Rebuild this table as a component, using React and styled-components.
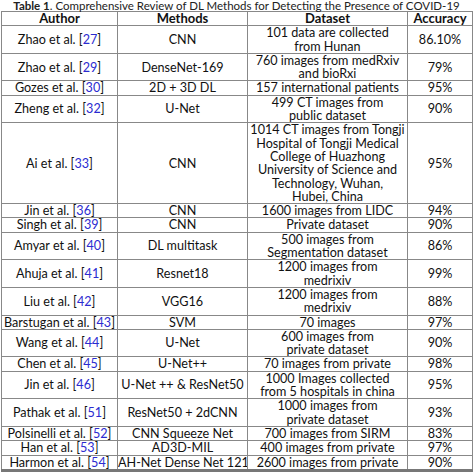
import React from "react";
import styled, { createGlobalStyle } from "styled-components";

const Global = createGlobalStyle`
  html, body { margin: 0; padding: 0; background: #fff; }
  body { font-family: Lato, "Open Sans", sans-serif; color: #111; }
`;

const Page = styled.div`
  width: 474px;
  height: 476px;
  overflow: hidden;
  padding: 0 2px 0 1px;
  box-sizing: border-box;
`;

const Caption = styled.div`
  font-size: 11.5px;
  line-height: 11px;
  height: 11px;
  text-align: center;
  white-space: nowrap;
  color: #222;
  b { font-weight: 700; }
`;

const Table = styled.table`
  width: 471px;
  border-collapse: collapse;
  table-layout: fixed;
  border-bottom: 3px solid #777;
`;

const Cell = styled.td`
  border: 1px solid #888;
  padding: 0;
  text-align: center;
  vertical-align: middle;
  font-size: 12.6px;
  line-height: 13.3px;
  white-space: nowrap;
  overflow: hidden;
`;

const Head = styled.th`
  border: 1px solid #888;
  padding: 0;
  font-size: 13px;
  line-height: 13.3px;
  font-weight: 700;
  text-align: center;
`;

const Ref = styled.span`
  color: #2b2bd0;
`;

const rows = [
  ["Zhao et al.", "27", "CNN", ["101 data are collected", "from Hunan"], "86.10%"],
  ["Zhao et al.", "29", "DenseNet-169", ["760 images from medRxiv", "and bioRxi"], "79%"],
  ["Gozes et al.", "30", "2D + 3D DL", ["157 international patients"], "95%"],
  ["Zheng et al.", "32", "U-Net", ["499 CT images from", "public dataset"], "90%"],
  ["Ai et al.", "33", "CNN", ["1014 CT images from Tongji", "Hospital of Tongji Medical", "College of Huazhong", "University of Science and", "Technology, Wuhan,", "Hubei, China"], "95%"],
  ["Jin et al.", "36", "CNN", ["1600 images from LIDC"], "94%"],
  ["Singh et al.", "39", "CNN", ["Private dataset"], "90%"],
  ["Amyar et al.", "40", "DL multitask", ["500 images from", "Segmentation dataset"], "86%"],
  ["Ahuja et al.", "41", "Resnet18", ["1200 images from", "medrixiv"], "99%"],
  ["Liu et al.", "42", "VGG16", ["1200 images from", "medrixiv"], "88%"],
  ["Barstugan et al.", "43", "SVM", ["70 images"], "97%"],
  ["Wang et al.", "44", "U-Net", ["600 images from", "private dataset"], "90%"],
  ["Chen et al.", "45", "U-Net++", ["70 images from private"], "98%"],
  ["Jin et al.", "46", "U-Net ++ & ResNet50", ["1000 Images collected", "from 5 hospitals in china"], "95%"],
  ["Pathak et al.", "51", "ResNet50 + 2dCNN", ["1000 images from", "private dataset"], "93%"],
  ["Polsinelli et al.", "52", "CNN Squeeze Net", ["700 images from SIRM"], "83%"],
  ["Han et al.", "53", "AD3D-MIL", ["400 images from private"], "97%"],
  ["Harmon et al.", "54", "AH-Net Dense Net 121", ["2600 images from private"], "90%"],
];

export default function App() {
  return (
    <Page>
      <Global />
      <Caption>
        <b>Table 1</b>. Comprehensive Review of DL Methods for Detecting the Presence of COVID-19
      </Caption>
      <Table>
        <colgroup>
          <col style={{ width: 116 }} />
          <col style={{ width: 130 }} />
          <col style={{ width: 160 }} />
          <col style={{ width: 65 }} />
        </colgroup>
        <thead>
          <tr>
            <Head>Author</Head>
            <Head>Methods</Head>
            <Head>Dataset</Head>
            <Head>Accuracy</Head>
          </tr>
        </thead>
        <tbody>
          {rows.map((r, i) => (
            <tr key={i}>
              <Cell>
                {r[0]} [<Ref>{r[1]}</Ref>]
              </Cell>
              <Cell>{r[2]}</Cell>
              <Cell>
                {r[3].map((l, j) => (
                  <div key={j}>{l}</div>
                ))}
              </Cell>
              <Cell>{r[4]}</Cell>
            </tr>
          ))}
        </tbody>
      </Table>
    </Page>
  );
}
